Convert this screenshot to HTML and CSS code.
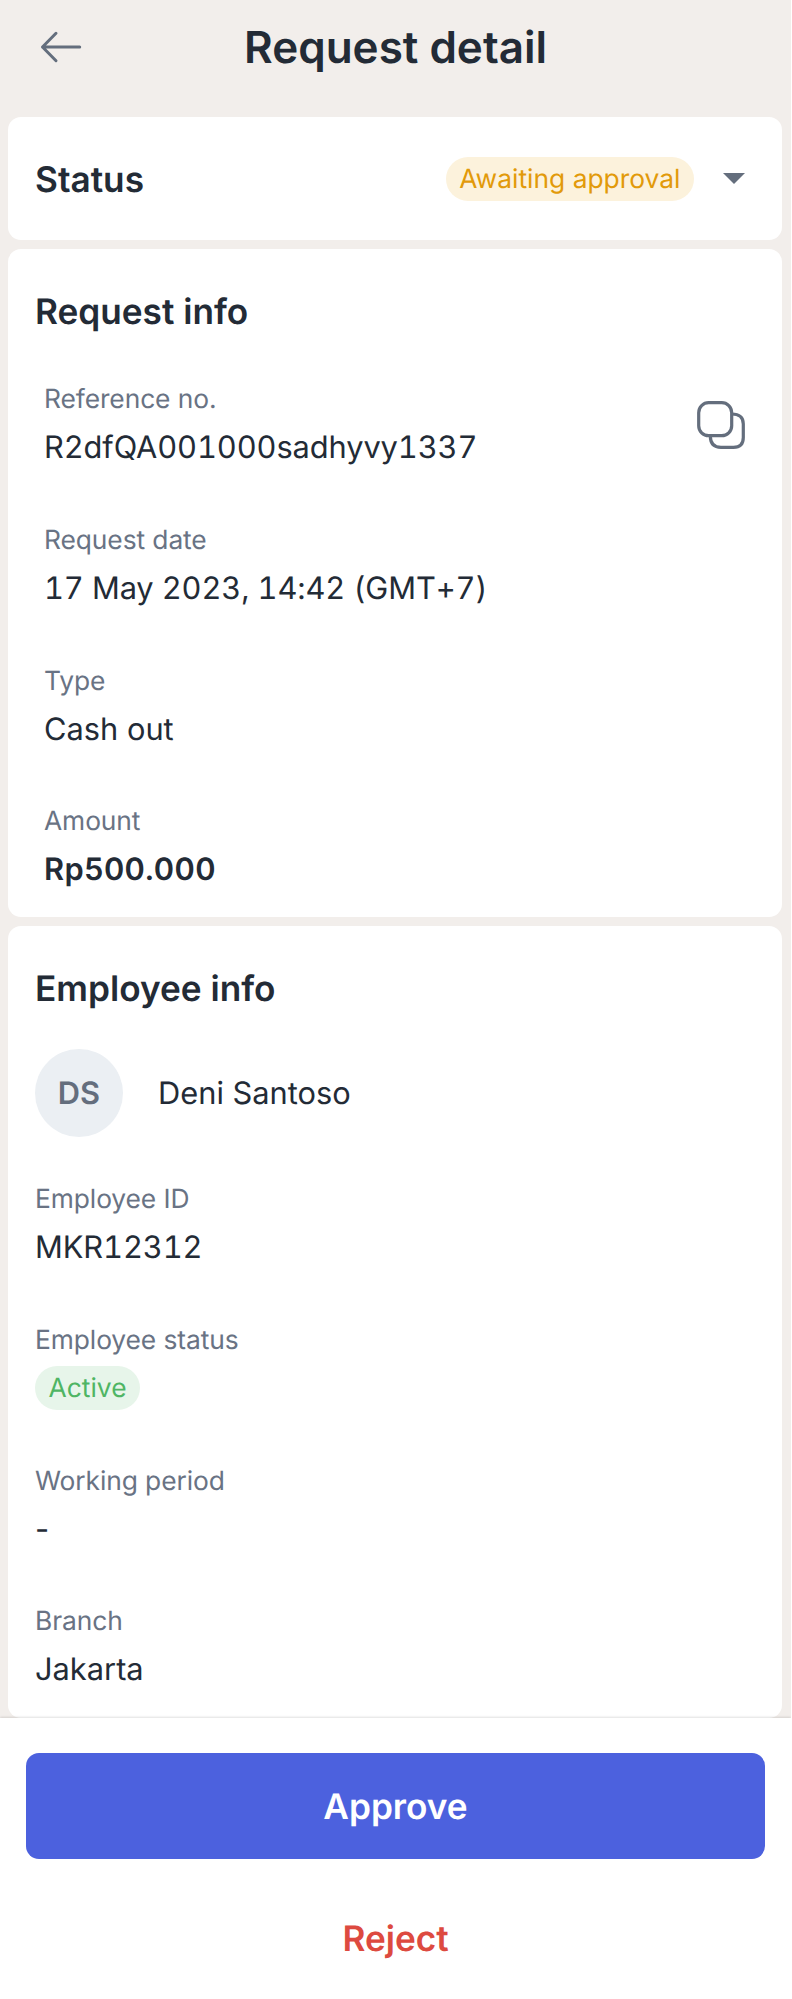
FILE: index.html
```html
<!DOCTYPE html>
<html lang="en">

<head>
    <meta charset="UTF-8">
    <meta name="viewport" content="width=device-width, initial-scale=1.0">
    <title>Request detail</title>
    <link rel="stylesheet" href="styles.css">
</head>

<body>
    <div class="page">
        <header class="header">
            <svg class="back" viewBox="0 0 44 36" fill="none">
                <path d="M18 4.3L4.5 18L18 31.7M4.5 18H41.7" />
            </svg>
            <h1>Request detail</h1>
        </header>

        <main class="content">
            <section class="card status">
                <h2>Status</h2>
                <span class="badge waiting">Awaiting approval</span>
                <svg class="caret" viewBox="0 0 22 11">
                    <path d="M0 0H22L11 11Z" />
                </svg>
            </section>

            <section class="card request">
                <h2>Request info</h2>
                <ul class="list">
                    <li class="copyRow">
                        <div>
                            <p class="label">Reference no.</p>
                            <p class="value number">R2dfQA001000sadhyvy1337</p>
                        </div>
                        <svg class="copy" viewBox="0 0 48 48" fill="none">
                            <rect x="1.7" y="1.7" width="33" height="33" rx="10" />
                            <path d="M34.7 13C42 13 46.3 16 46.3 23V36.5C46.3 43 43 46.3 36.5 46.3H24C17 46.3 13.3 43 13.3 34.7" />
                        </svg>
                    </li>
                    <li>
                        <p class="label">Request date</p>
                        <p class="value number">17 May 2023, 14:42 (GMT+7)</p>
                    </li>
                    <li>
                        <p class="label">Type</p>
                        <p class="value">Cash out</p>
                    </li>
                    <li>
                        <p class="label">Amount</p>
                        <p class="value bold">Rp500.000</p>
                    </li>
                </ul>
            </section>

            <section class="card employee">
                <h2>Employee info</h2>
                <div class="person">
                    <span class="avatar">DS</span>
                    <span class="value">Deni Santoso</span>
                </div>
                <ul class="list">
                    <li>
                        <p class="label">Employee ID</p>
                        <p class="value number">MKR12312</p>
                    </li>
                    <li>
                        <p class="label">Employee status</p>
                        <span class="badge active">Active</span>
                    </li>
                    <li>
                        <p class="label">Working period</p>
                        <p class="value">-</p>
                    </li>
                    <li>
                        <p class="label">Branch</p>
                        <p class="value">Jakarta</p>
                    </li>
                </ul>
            </section>
        </main>

        <footer class="footer">
            <button class="btn approve">Approve</button>
            <button class="btn reject">Reject</button>
        </footer>
    </div>
</body>

</html>
```

FILE: styles.css
```css
* {
    margin: 0;
    padding: 0;
    box-sizing: border-box;
}

li {
    list-style: none;
}

body {
    font-family: Inter, "Liberation Sans", sans-serif;
    text-rendering: geometricPrecision;
    color: #232b36;
    background-color: #fff;
}

.page {
    display: flex;
    flex-direction: column;
    width: 791px;
    height: 1999px;
    overflow: hidden;
    background-color: #f2eeeb;
}

.header {
    display: grid;
    grid-template-columns: 82px 1fr 82px;
    align-items: center;
    height: 93px;
    margin-bottom: 24px;
}

.header h1 {
    text-align: center;
    font-size: 44px;
    font-weight: 600;
    line-height: 60px;
}

.back {
    width: 44px;
    height: 36px;
    margin-left: 38px;
    stroke: #646e7d;
    stroke-width: 3;
    stroke-linecap: round;
    stroke-linejoin: round;
}

.content {
    display: flex;
    flex-direction: column;
    gap: 9px;
    height: 1601px;
    padding: 0 9px 0 8px;
}

.card {
    padding: 0 26px 0 27px;
    border-radius: 13px;
    background-color: #fff;
}

.card h2 {
    font-size: 35.2px;
    font-weight: 600;
    line-height: 52px;
}

.status {
    display: flex;
    align-items: center;
    height: 123px;
}

.status h2 {
    padding-top: 2px;
}

.status .badge {
    margin-left: auto;
}

.caret {
    width: 22px;
    height: 11px;
    margin: 0 11px 0 29px;
    fill: #646e7d;
}

.badge {
    display: inline-block;
    height: 44px;
    padding: 0 13.5px;
    border-radius: 22px;
    font-size: 26.4px;
    line-height: 44px;
}

.waiting {
    color: #e29a0a;
    background-color: #fcf2dc;
}

.active {
    margin-top: 4px;
    color: #4fb564;
    background-color: #e7f5ea;
}

.request {
    height: 668px;
    padding-top: 37px;
}

.request .list {
    padding: 39px 9px 0;
}

.list li {
    height: 140.8px;
}

.copyRow {
    display: flex;
    justify-content: space-between;
}

.copy {
    width: 48px;
    height: 48px;
    margin: 24px 2px 0 0;
    stroke: #646e7d;
    stroke-width: 3.2;
}

.label {
    font-size: 26.4px;
    line-height: 44px;
    letter-spacing: -0.1px;
    color: #697384;
}

.value {
    font-size: 30.8px;
    line-height: 53px;
}

.number {
    font-variant-numeric: tabular-nums;
    letter-spacing: -0.1px;
}

.bold {
    font-weight: 600;
    letter-spacing: 0.4px;
}

.employee {
    height: 792px;
    padding-top: 37px;
}

.person {
    display: flex;
    align-items: center;
    gap: 35px;
    margin: 34px 0 40px;
}

.avatar {
    width: 88px;
    height: 88px;
    border-radius: 50%;
    text-align: center;
    font-size: 30.8px;
    font-weight: 600;
    line-height: 90px;
    color: #646e7d;
    background-color: #ebeff3;
}

.footer {
    display: flex;
    flex-direction: column;
    flex: 1;
    gap: 26px;
    padding: 35px 26px 0;
    background-color: #fff;
    box-shadow: 0 -1px 2px rgba(0, 0, 0, .12);
}

.btn {
    height: 106px;
    padding-top: 2px;
    border: none;
    border-radius: 13px;
    font-family: inherit;
    font-size: 35.2px;
    font-weight: 600;
    text-rendering: inherit;
    background-color: transparent;
}

.approve {
    color: #fff;
    background-color: #4c61de;
}

.reject {
    color: #dd4a40;
}
```
